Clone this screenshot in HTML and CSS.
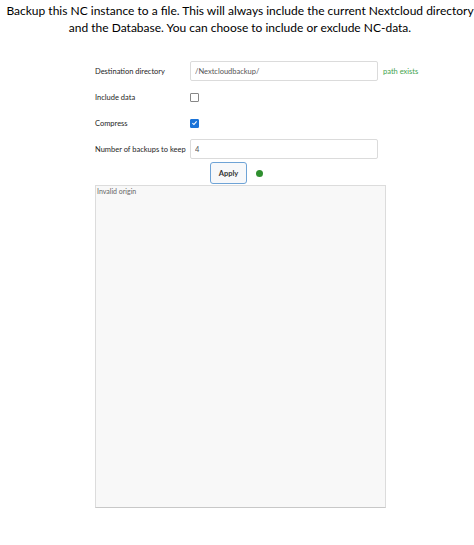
FILE: index.html
```html
<!DOCTYPE html>
<html>
<head>
<meta charset="utf-8">
<link rel="stylesheet" href="styles.css">
</head>
<body>
<p class="intro">Backup this NC instance to a file. This will always include the current Nextcloud directory and the Database. You can choose to include or exclude NC-data.</p>
<div class="form">
  <div class="row">
    <label class="lbl">Destination directory</label>
    <div class="ctrl"><input class="txt" type="text" value="/Nextcloudbackup/"><span class="ok">path exists</span></div>
  </div>
  <div class="row">
    <label class="lbl">Include data</label>
    <div class="ctrl"><span class="cb"></span></div>
  </div>
  <div class="row">
    <label class="lbl">Compress</label>
    <div class="ctrl"><span class="cb checked"><svg viewBox="0 0 10 10" width="8" height="8"><path d="M2 5.2 L4.2 7.2 L8 2.8" fill="none" stroke="#fff" stroke-width="1.6"/></svg></span></div>
  </div>
  <div class="row">
    <label class="lbl">Number of backups to keep</label>
    <div class="ctrl"><input class="txt" type="text" value="4"></div>
  </div>
  <div class="actions">
    <button class="btn">Apply</button><span class="dot"></span>
  </div>
  <div class="log">Invalid origin</div>
</div>
</body>
</html>
```
FILE: styles.css
```css
html, body {
  margin: 0;
  padding: 0;
  background: #fff;
}
body {
  font-family: Lato, "Open Sans", sans-serif;
  color: #222;
}
.intro {
  margin: 2px 0 0 0;
  text-align: center;
  font-size: 12px;
  line-height: 17px;
  color: #000;
  padding: 0 0 0 6px;
}
.form {
  margin: 22px 0 0 95px;
  width: 290px;
}
.row {
  display: grid;
  grid-template-columns: 95px 1fr;
  align-items: center;
  height: 26px;
}
.lbl {
  font-size: 7.5px;
  color: #1e1e1e;
  white-space: nowrap;
}
.ctrl {
  display: flex;
  align-items: center;
}
.txt {
  box-sizing: border-box;
  width: 188px;
  height: 20px;
  border: 1px solid #dbdbdb;
  border-radius: 2px;
  padding: 0 4px;
  font-family: inherit;
  font-size: 7.5px;
  color: #555;
  background: #fff;
  margin: 0;
}
.ok {
  margin-left: 5px;
  font-size: 7.5px;
  color: #3fa34d;
  white-space: nowrap;
}
.cb {
  box-sizing: border-box;
  width: 9px;
  height: 9px;
  border: 1px solid #878787;
  border-radius: 1px;
  display: flex;
  align-items: center;
  justify-content: center;
}
.cb.checked {
  background: #1a73d8;
  border-color: #1a73d8;
}
.actions {
  display: flex;
  align-items: center;
  padding-left: 115px;
}
.btn {
  box-sizing: border-box;
  width: 37px;
  height: 22px;
  border: 1px solid #6ea3d6;
  border-radius: 3px;
  background: #f7f8fa;
  font-family: inherit;
  font-weight: bold;
  font-size: 7.5px;
  color: #333;
  padding: 0;
}
.dot {
  width: 7px;
  height: 7px;
  border-radius: 50%;
  background: #2f8f2f;
  margin-left: 9px;
}
.log {
  box-sizing: border-box;
  margin-top: 1px;
  width: 291px;
  height: 323px;
  background: #f8f8f8;
  border: 1px solid #dcdcdc;
  border-bottom-color: #c8c8c8;
  font-size: 7px;
  color: #666;
  padding: 1px 0 0 1px;
}
```
